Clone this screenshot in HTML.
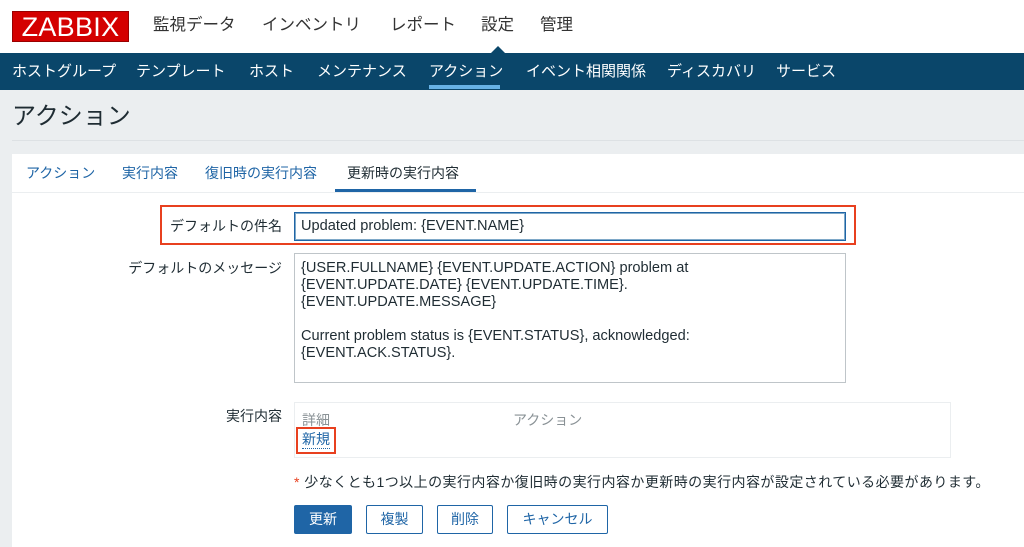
<!DOCTYPE html>
<html><head><meta charset="utf-8"><style>
*{margin:0;padding:0;box-sizing:border-box}
body{width:1024px;height:547px;overflow:hidden;background:#ebeef0;font-family:"Liberation Sans","Noto Sans CJK JP",sans-serif;color:#1f2c33;position:relative}
.a{position:absolute;white-space:nowrap}
#hdr{position:absolute;left:0;top:0;width:1024px;height:53px;background:#fff}
#logo{left:12px;top:11px;width:117px;height:31px;background:#d40000;color:#fff;font-size:27px;line-height:31px;text-align:center;letter-spacing:0.3px;border:1px solid #900}
.top{top:14px;font-size:16.5px;color:#333;line-height:22px}
#nav{position:absolute;left:0;top:53px;width:1024px;height:37px;background:#0a466a}
.nv{top:62px;font-size:15px;color:#fff;line-height:20px}
#card{position:absolute;left:12px;top:154px;width:1012px;height:393px;background:#fff}
.tab{top:163px;font-size:14px;color:#1f65a6;line-height:20px}
.lbl{font-size:14px;color:#1f2c33;text-align:right;right:742px;line-height:18px}
.mono{font-size:14.6px;line-height:18px;color:#1f2c33}
.btn{top:505px;height:29px;border:1px solid #1f65a6;border-radius:2px;color:#1f65a6;font-size:14px;line-height:27px;text-align:center;background:#fff}
</style></head><body>
<div id="hdr"></div>
<div class="a" id="logo">ZABBIX</div>
<div class="a top" style="left:153px">監視データ</div>
<div class="a top" style="left:262px">インベントリ</div>
<div class="a top" style="left:390px">レポート</div>
<div class="a top" style="left:481px">設定</div>
<div class="a top" style="left:540px">管理</div>
<div id="nav"></div>
<div class="a" style="top:46px;width:0;height:0;border-left:8px solid transparent;border-right:8px solid transparent;border-bottom:8px solid #0a466a;left:490px"></div>
<div class="a nv" style="left:12px">ホストグループ</div>
<div class="a nv" style="left:136px">テンプレート</div>
<div class="a nv" style="left:249px">ホスト</div>
<div class="a nv" style="left:317px">メンテナンス</div>
<div class="a nv" style="left:429px">アクション</div>
<div class="a" style="left:429px;top:85px;width:71px;height:4px;background:#67b2e6"></div>
<div class="a nv" style="left:526px">イベント相関関係</div>
<div class="a nv" style="left:667px">ディスカバリ</div>
<div class="a nv" style="left:776px">サービス</div>
<div class="a" style="left:12px;top:102px;font-size:24px;line-height:30px;color:#1f2c33">アクション</div>
<div class="a" style="left:12px;top:140px;width:1012px;height:1px;background:#dde1e4"></div>
<div id="card"></div>
<div class="a tab" style="left:26px">アクション</div>
<div class="a tab" style="left:122px">実行内容</div>
<div class="a tab" style="left:205px">復旧時の実行内容</div>
<div class="a tab" style="left:347px;color:#1f2c33">更新時の実行内容</div>
<div class="a" style="left:12px;top:192px;width:1012px;height:1px;background:#ebeef0"></div>
<div class="a" style="left:335px;top:189px;width:141px;height:3px;background:#1f65a6"></div>

<div class="a" style="left:160px;top:205px;width:696px;height:40px;border:2px solid #e8401f"></div>
<div class="a lbl" style="top:217px">デフォルトの件名</div>
<div class="a" style="left:294px;top:212px;width:552px;height:29px;border:1px solid #1f65a6;box-shadow:inset 0 0 0 1px #7ea8c8"></div>
<div class="a mono" style="left:301px;top:217px">Updated problem: {EVENT.NAME}</div>
<div class="a lbl" style="top:259px">デフォルトのメッセージ</div>
<div class="a" style="left:294px;top:253px;width:552px;height:130px;border:1px solid #bfc5c9"></div>
<div class="a mono" style="left:301px;top:260px;line-height:17px">{USER.FULLNAME} {EVENT.UPDATE.ACTION} problem at<br>{EVENT.UPDATE.DATE} {EVENT.UPDATE.TIME}.<br>{EVENT.UPDATE.MESSAGE}<br><br>Current problem status is {EVENT.STATUS}, acknowledged:<br>{EVENT.ACK.STATUS}.</div>
<div class="a lbl" style="top:407px">実行内容</div>
<div class="a" style="left:294px;top:402px;width:657px;height:56px;border:1px solid #ebeef0"></div>
<div class="a" style="left:302px;top:410px;font-size:14px;color:#8a9296">詳細</div>
<div class="a" style="left:513px;top:410px;font-size:14px;color:#8a9296">アクション</div>
<div class="a" style="left:296px;top:427px;width:40px;height:27px;border:2px solid #e8401f"></div>
<div class="a" style="left:302px;top:431px;font-size:14px;color:#1f65a6;border-bottom:1px dotted #1f65a6;line-height:17px">新規</div>
<div class="a" style="left:294px;top:473px;font-size:14px;line-height:18px;letter-spacing:0.45px"><span style="color:#e8401f">*</span> 少なくとも1つ以上の実行内容か復旧時の実行内容か更新時の実行内容が設定されている必要があります。</div>
<div class="a btn" style="left:294px;width:58px;background:#1f65a6;color:#fff">更新</div>
<div class="a btn" style="left:366px;width:57px">複製</div>
<div class="a btn" style="left:437px;width:56px">削除</div>
<div class="a btn" style="left:507px;width:101px">キャンセル</div>
</body></html>
